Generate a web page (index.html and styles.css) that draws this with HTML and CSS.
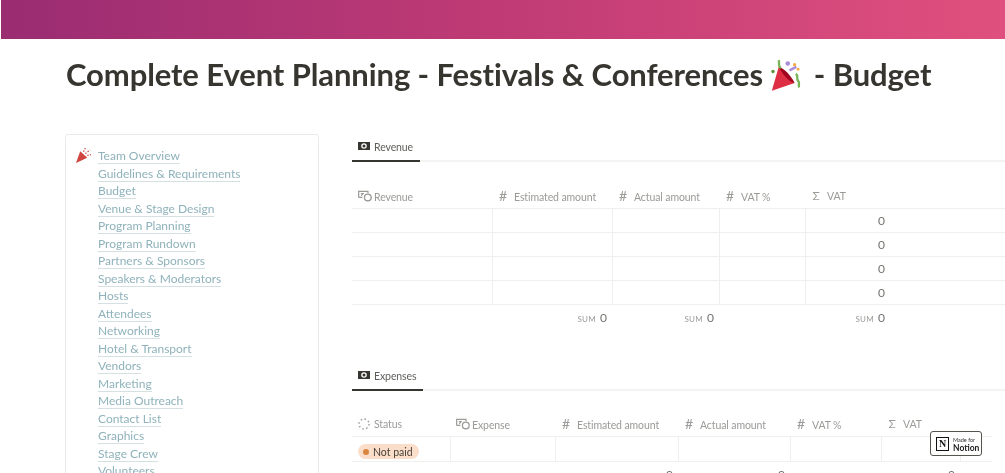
FILE: index.html
```html
<!DOCTYPE html>
<html lang="en">
<head>
  <meta charset="UTF-8" />
  <title>Complete Event Planning - Budget</title>
  <link rel="stylesheet" href="styles.css">
</head>
<body>
  <svg class="defs" width="0" height="0">
    <symbol id="bill" viewBox="0 0 12 10">
      <path fill="#37352f" fill-rule="evenodd" d="M0 1h12v8H0zM6 2.2a2.8 2.8 0 1 0 0 5.6 2.8 2.8 0 0 0 0-5.6z"/>
      <circle cx="6" cy="5" r="1.5" fill="#37352f"/>
    </symbol>
    <symbol id="bills" viewBox="0 0 15 12">
      <path fill="none" stroke="#9b9a97" stroke-width="1.3" d="M.7 7.5V1h10v2M.7 7.5h4"/>
      <path fill="none" stroke="#9b9a97" stroke-width="1.2" d="M3 3.5h2.5L3.5 6"/>
      <circle cx="10.5" cy="7.5" r="3.6" fill="none" stroke="#9b9a97" stroke-width="1.4"/>
    </symbol>
    <symbol id="popper" viewBox="3 1 26 29">
      <path fill="#dd2e44" d="M4 29 10 8l14 14z"/>
      <path fill="#a0041e" d="M10 8c5 1 11 8 14 14-5-1-11-8-14-14z"/>
      <path fill="none" stroke="#77b255" stroke-width="2" d="M12 9c-3-2-1-4-2-7"/>
      <path fill="none" stroke="#77b255" stroke-width="2" d="M25 14c3 2 0 4 2 6s0 4 1 6"/>
      <circle cx="18" cy="5" r="2" fill="#aa8dd8"/>
      <circle cx="24" cy="6" r="1.5" fill="#fcab40"/>
      <circle cx="27" cy="10" r="1.3" fill="#fcab40"/>
      <circle cx="5" cy="12" r="1.5" fill="#5c913b"/>
      <path fill="#aa8dd8" d="M19 10l6-3 1 2-6 3z"/>
    </symbol>
    <symbol id="popper-red" viewBox="0 0 16 16">
      <path fill="#d0453f" d="M0 16 4.500 3.500 12 10.500z"/>
      <path fill="none" stroke="#d0453f" stroke-width="1.300" stroke-dasharray="1.500 1.500" d="M8 4l2-4M10 6l5-4M12 8l4-1"/>
    </symbol>
  </svg>

  <div class="banner"></div>

  <h1 class="title">Complete Event Planning - Festivals &amp; Conferences <svg class="title-emoji"><use href="#popper"/></svg> - Budget</h1>

  <main class="columns">
    <aside class="callout">
      <svg class="callout-icon"><use href="#popper-red"/></svg>
      <ul class="links">
        <li><a>Team Overview</a></li>
        <li><a>Guidelines &amp; Requirements</a></li>
        <li><a>Budget</a></li>
        <li><a>Venue &amp; Stage Design</a></li>
        <li><a>Program Planning</a></li>
        <li><a>Program Rundown</a></li>
        <li><a>Partners &amp; Sponsors</a></li>
        <li><a>Speakers &amp; Moderators</a></li>
        <li><a>Hosts</a></li>
        <li><a>Attendees</a></li>
        <li><a>Networking</a></li>
        <li><a>Hotel &amp; Transport</a></li>
        <li><a>Vendors</a></li>
        <li><a>Marketing</a></li>
        <li><a>Media Outreach</a></li>
        <li><a>Contact List</a></li>
        <li><a>Graphics</a></li>
        <li><a>Stage Crew</a></li>
        <li><a>Volunteers</a></li>
      </ul>
    </aside>

    <section class="budget">
      <div class="tabs">
        <div class="tab"><svg class="tab-icon"><use href="#bill"/></svg>Revenue</div>
      </div>
      <table class="db revenue">
        <colgroup><col class="r1"><col class="r2"><col class="r3"><col class="r4"><col class="r5"><col></colgroup>
        <thead>
          <tr>
            <th><svg class="head-icon"><use href="#bills"/></svg>Revenue</th>
            <th><span class="hash">#</span>Estimated amount</th>
            <th><span class="hash">#</span>Actual amount</th>
            <th><span class="hash">#</span>VAT %</th>
            <th><span class="hash sigma">Σ</span>VAT</th>
            <th></th>
          </tr>
        </thead>
        <tbody>
          <tr><td></td><td></td><td></td><td></td><td class="num">0</td><td></td></tr>
          <tr><td></td><td></td><td></td><td></td><td class="num">0</td><td></td></tr>
          <tr><td></td><td></td><td></td><td></td><td class="num">0</td><td></td></tr>
          <tr><td></td><td></td><td></td><td></td><td class="num">0</td><td></td></tr>
        </tbody>
        <tfoot>
          <tr>
            <td></td>
            <td class="num"><small>SUM</small>0</td>
            <td class="num"><small>SUM</small>0</td>
            <td></td>
            <td class="num"><small>SUM</small>0</td>
            <td></td>
          </tr>
        </tfoot>
      </table>

      <div class="tabs tabs-second">
        <div class="tab"><svg class="tab-icon"><use href="#bill"/></svg>Expenses</div>
      </div>
      <table class="db expenses">
        <colgroup><col class="e1"><col class="e2"><col class="e3"><col class="e4"><col class="e5"><col class="e6"><col></colgroup>
        <thead>
          <tr>
            <th>
              <svg class="head-icon status-icon" viewBox="0 0 12 12"><circle cx="6" cy="6" r="5" fill="none" stroke="#9b9a97" stroke-width="1.4" stroke-dasharray="1.6 2.3"/></svg>Status
            </th>
            <th><svg class="head-icon"><use href="#bills"/></svg>Expense</th>
            <th><span class="hash">#</span>Estimated amount</th>
            <th><span class="hash">#</span>Actual amount</th>
            <th><span class="hash">#</span>VAT %</th>
            <th><span class="hash sigma">Σ</span>VAT</th>
            <th></th>
          </tr>
        </thead>
        <tbody>
          <tr>
            <td class="status-cell"><span class="pill"><i class="dot"></i>Not paid</span></td>
            <td></td><td></td><td></td><td></td><td></td><td></td>
          </tr>
        </tbody>
        <tfoot>
          <tr>
            <td></td><td></td>
            <td class="num"><small>SUM</small>0</td>
            <td class="num"><small>SUM</small>0</td>
            <td></td>
            <td class="num"><small>SUM</small>0</td>
            <td></td>
          </tr>
        </tfoot>
      </table>
    </section>
  </main>

  <div class="made-for">
    <span class="notion-logo">N</span>
    <span class="made-text"><small>Made for</small><b>Notion</b></span>
  </div>
</body>
</html>
```

FILE: styles.css
```css
html, body {
  height: 473px;
  overflow: hidden;
}
body {
  margin: 0;
  background: #fff;
  color: #37352f;
  font-family: Lato, "Open Sans", sans-serif;
  filter: blur(.4px);
}
.defs {
  position: absolute;
}

.banner {
  height: 39px;
  margin-left: 1px;
  background: linear-gradient(90deg, #9a2c72 0%, #c03b75 50%, #e0507e 100%);
}

.title {
  margin: 16px 0 0 66px;
  height: 38px;
  font-size: 31px;
  line-height: 38px;
  font-weight: 700;
  letter-spacing: -.1px;
  white-space: nowrap;
}
.title-emoji {
  width: 31px;
  height: 33px;
  margin-right: 5px;
  vertical-align: -6px;
}

.columns {
  display: flex;
  margin: 41px 0 0 65px;
}

.callout {
  display: flex;
  flex: 0 0 254px;
  box-sizing: border-box;
  height: 400px;
  padding: 12px 0 0 10px;
  border: 1px solid #e9e9e7;
  border-radius: 3px;
}
.callout-icon {
  flex: none;
  width: 15px;
  height: 15px;
  margin-top: 1px;
  margin-right: 7px;
}
.links {
  margin: 0;
  padding: 0;
  list-style: none;
  font-size: 12px;
  line-height: 17.5px;
}
.links a {
  color: #8fb2bb;
  border-bottom: 1px solid #d5e0e3;
}

.budget {
  flex: 1;
  margin-left: 33px;
  min-width: 0;
}

.tabs {
  height: 28px;
  border-bottom: 2px solid #f3f3f2;
  box-sizing: border-box;
  padding-top: 1px;
}
.tabs-second {
  margin-top: 33px;
}
.tab {
  display: inline-flex;
  align-items: center;
  height: 25px;
  padding: 0 7px 2px 6px;
  box-sizing: border-box;
  border-bottom: 2px solid #37352f;
  font-size: 10.5px;
  letter-spacing: -.1px;
  color: #5f5e5b;
}
.tab-icon {
  width: 12px;
  height: 10px;
  margin-top: -2px;
  margin-right: 4px;
}

.db {
  border-collapse: collapse;
  table-layout: fixed;
  margin-top: 24px;
}
.db.revenue {
  width: 653px;
}
.db.expenses {
  width: 640px;
  margin-top: 23px;
}
.r1 { width: 140px; }
.r2 { width: 120px; }
.r3 { width: 107px; }
.r4 { width: 86px; }
.r5 { width: 85px; }
.e1 { width: 98px; }
.e2 { width: 105px; }
.e3 { width: 123px; }
.e4 { width: 112px; }
.e5 { width: 91px; }
.e6 { width: 79px; }

.db th {
  height: 20px;
  padding: 0 0 2px 6px;
  border-bottom: 1px solid #efefee;
  font-size: 10.5px;
  letter-spacing: -.1px;
  font-weight: 400;
  text-align: left;
  color: #9b9a97;
  white-space: nowrap;
}
.hash {
  display: inline-block;
  width: 10px;
  margin-right: 6px;
  font-size: 14px;
  line-height: 14px;
  text-align: center;
}
.sigma {
  font-size: 12px;
}
.head-icon {
  width: 14px;
  height: 12px;
  margin-right: 2px;
  vertical-align: -1px;
}
.status-icon {
  width: 12px;
  height: 12px;
  margin-right: 4px;
  vertical-align: -2px;
}

.db tbody td {
  height: 23px;
  padding: 0;
  border-bottom: 1px solid #efefee;
  border-right: 1px solid #efefee;
}
.expenses tbody td {
  height: 24px;
}
.db tbody td:last-child,
.revenue tbody td:nth-child(5) {
  border-right: none;
}
.db td.num {
  padding-right: 5px;
  text-align: right;
  font-size: 12px;
  color: #73726e;
}
.db tfoot td {
  height: 22px;
  padding-bottom: 2px;
}
small {
  font-size: 8px;
  letter-spacing: .3px;
  margin-right: 4px;
  color: #9b9a97;
}

.status-cell {
  padding-left: 6px !important;
}
.pill {
  display: inline-flex;
  align-items: center;
  height: 15px;
  padding: 0 6px 0 5px;
  border-radius: 8px;
  background: #fadec9;
  font-size: 10.5px;
  color: #49423a;
}
.dot {
  width: 6px;
  height: 6px;
  margin-right: 4px;
  border-radius: 50%;
  background: #d9853f;
}

/* badge sits over the table */
.made-for {
  position: absolute;
  left: 930px;
  top: 431px;
  display: flex;
  align-items: center;
  box-sizing: border-box;
  width: 52px;
  height: 25px;
  padding-left: 5px;
  background: #fff;
  border: 1px solid #55534e;
  border-radius: 3px;
}
.notion-logo {
  width: 13px;
  height: 14px;
  margin-right: 4px;
  border: 1.5px solid #111;
  box-sizing: border-box;
  font: 700 10px/11px "Liberation Serif", serif;
  text-align: center;
  color: #111;
}
.made-text {
  display: flex;
  flex-direction: column;
  line-height: 8px;
}
.made-text small {
  margin: 0;
  font-size: 5.5px;
  letter-spacing: 0;
  color: #37352f;
}
.made-text b {
  font-size: 8.5px;
  font-weight: 700;
  color: #222;
}
```
